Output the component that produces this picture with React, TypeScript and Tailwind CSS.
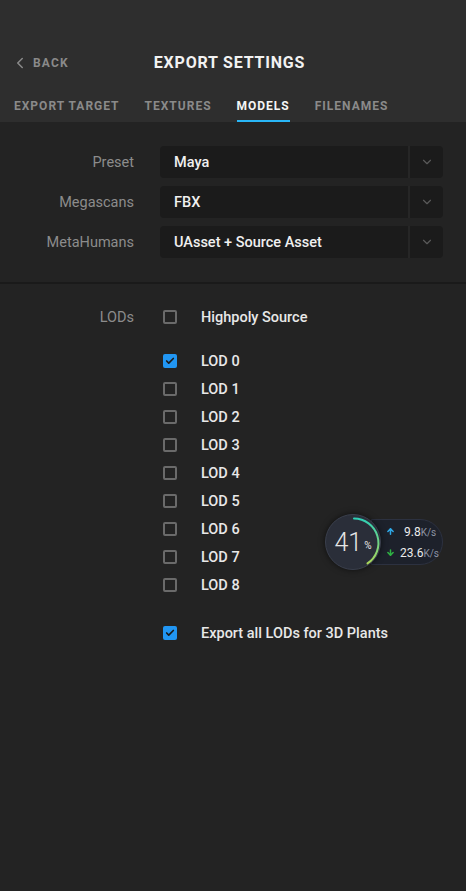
import { ChevronLeft, ChevronDown, Check, ArrowUp, ArrowDown } from 'lucide-react';

const font = { fontFamily: 'Roboto, "Liberation Sans", sans-serif' };

const tabs = ['EXPORT TARGET', 'TEXTURES', 'MODELS', 'FILENAMES'];

const selects = [
  { label: 'Preset', value: 'Maya' },
  { label: 'Megascans', value: 'FBX' },
  { label: 'MetaHumans', value: 'UAsset + Source Asset' },
];

const lods = [true, false, false, false, false, false, false, false, false];

const Box: React.FC<{ checked?: boolean }> = ({ checked }) =>
  checked ? (
    <span className="ml-[3px] flex h-[14px] w-[14px] shrink-0 items-center justify-center rounded-[2px] bg-[#2196f3]">
      <Check className="h-[10px] w-[10px] text-[#1a1a1a]" strokeWidth={4} />
    </span>
  ) : (
    <span className="ml-[3px] h-[14px] w-[14px] shrink-0 rounded-[2px] border-2 border-[#6a6a6a]" />
  );

const CheckRow: React.FC<{ checked?: boolean; label: string; className?: string }> = ({ checked, label, className }) => (
  <div className={`flex h-[28px] items-center gap-[24px] ${className ?? ''}`}>
    <Box checked={checked} />
    <span className="pt-[1px] text-[14.5px] font-medium text-[#e8e8e8]">{label}</span>
  </div>
);

const SpeedWidget = () => (
  <div className="absolute left-[325px] top-[514px] h-[56px] w-[120px]">
    <div className="absolute left-[46px] top-[5px] flex h-[46px] w-[72px] flex-col justify-center gap-[3px] rounded-r-full border border-[#2c3140] bg-[#1d212b] pl-[14px]">
      <div className="flex items-center gap-[7px]">
        <ArrowUp className="h-[9px] w-[9px] text-[#2ea8e8]" strokeWidth={4} />
        <span className="ml-[2px] text-[12px] text-[#ececec]">
          9.8<span className="text-[10px] text-[#8c93a3]">K/s</span>
        </span>
      </div>
      <div className="flex items-center gap-[5px]">
        <ArrowDown className="h-[9px] w-[9px] text-[#2fb344]" strokeWidth={4} />
        <span className="text-[12px] text-[#ececec]">
          23.6<span className="text-[10px] text-[#8c93a3]">K/s</span>
        </span>
      </div>
    </div>
    <div className="absolute left-0 top-0 flex h-[56px] w-[56px] items-center justify-center rounded-full border border-[#3a3f4c] bg-[#2a2e39] shadow-[0_0_6px_rgba(0,0,0,0.6)]">
      <svg className="absolute inset-0" width="56" height="56" viewBox="0 0 56 56">
        <defs>
          <linearGradient id="arc" x1="0" y1="0" x2="0" y2="1">
            <stop offset="0" stopColor="#2fd0b6" />
            <stop offset="1" stopColor="#a9d65a" />
          </linearGradient>
        </defs>
        <path d="M28 3.5 A24.5 24.5 0 0 1 41.5 48.4" fill="none" stroke="url(#arc)" strokeWidth="2" strokeLinecap="round" />
      </svg>
      <span className="relative text-[25px] font-light leading-none text-[#e6e6e6]">41</span>
      <span className="relative ml-[2px] mt-[6px] text-[10px] text-[#e6e6e6]">%</span>
    </div>
  </div>
);

export default function App() {
  return (
    <div className="relative h-[891px] w-[466px] overflow-hidden bg-[#232323]" style={font}>
      <header className="h-[122px] bg-[#2e2e2e]">
        <div className="relative flex h-[46px] items-center justify-center pt-[40px] box-content">
          <div className="absolute left-[11px] top-[40px] flex h-[46px] items-center gap-[4px] text-[#8a8a8a]">
            <ChevronLeft className="h-[18px] w-[18px]" strokeWidth={2} />
            <span className="text-[12px] font-bold tracking-[1.2px]">BACK</span>
          </div>
          <h1 className="pr-[7px] text-[16px] font-bold tracking-[0.8px] text-[#f2f2f2]">EXPORT SETTINGS</h1>
        </div>
        <nav className="flex h-[36px] gap-[25px] px-[14px]">
          {tabs.map((t) => (
            <div
              key={t}
              className={`flex h-full items-center border-b-2 pt-[6px] text-[12px] font-bold tracking-[1px] ${
                t === 'MODELS' ? 'border-[#29b6f6] text-[#f5f5f5]' : 'border-transparent text-[#8a8a8a]'
              }`}
            >
              {t}
            </div>
          ))}
        </nav>
      </header>

      <section className="flex flex-col gap-[8px] pb-[24px] pt-[24px]">
        {selects.map((s) => (
          <div key={s.label} className="grid grid-cols-[134px_1fr] items-center gap-x-[26px] pr-[23px]">
            <span className="pt-[1px] text-right text-[14.5px] text-[#8c8c8c]">{s.label}</span>
            <div className="flex h-[32px] overflow-hidden rounded-[4px] bg-[#1b1b1b]">
              <div className="flex flex-1 items-center px-[14px] pt-[1px] text-[14.5px] font-medium text-[#f0f0f0]">{s.value}</div>
              <div className="w-[2px] bg-[#262626]" />
              <div className="flex w-[33px] items-center justify-center">
                <ChevronDown className="h-[14px] w-[14px] text-[#5a5a5a]" strokeWidth={2} />
              </div>
            </div>
          </div>
        ))}
      </section>

      <div className="h-[2px] bg-[#1a1a1a]" />

      <section className="grid grid-cols-[134px_1fr] gap-x-[26px] pt-[19px]">
        <span className="flex h-[28px] items-center justify-end pt-[1px] text-[14.5px] text-[#8c8c8c]">LODs</span>
        <div className="flex flex-col">
          <CheckRow label="Highpoly Source" className="mb-[16px]" />
          {lods.map((c, i) => (
            <CheckRow key={i} checked={c} label={`LOD ${i}`} />
          ))}
          <CheckRow checked label="Export all LODs for 3D Plants" className="mt-[20px]" />
        </div>
      </section>

      <SpeedWidget />
    </div>
  );
}
